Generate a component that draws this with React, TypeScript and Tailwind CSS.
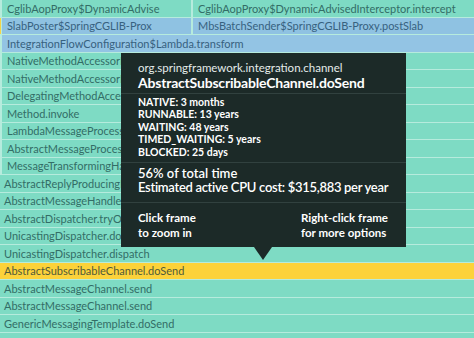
const teal = 'bg-[#7edbc4] text-[#336d66]';
const blue = 'bg-[#8fc2e2] text-[#37617f]';
const yellow = 'bg-[#fcd23a] text-[#4f5a3a]';

type Frame = { label: string; color: string; width?: string };
type Row = { indent: boolean; edge?: string; frames: Frame[] };

const rows: Row[] = [
  {
    indent: true,
    frames: [
      { label: 'CglibAopProxy$DynamicAdvise', color: teal, width: 'w-[189px]' },
      { label: 'CglibAopProxy$DynamicAdvisedInterceptor.intercept', color: teal },
    ],
  },
  {
    indent: true,
    edge: 'bg-[#f3d24a]',
    frames: [
      { label: 'SlabPoster$SpringCGLIB-Prox', color: blue, width: 'w-[189px]' },
      { label: 'MbsBatchSender$SpringCGLIB-Proxy.postSlab', color: blue },
    ],
  },
  { indent: true, frames: [{ label: 'IntegrationFlowConfiguration$Lambda.transform', color: 'bg-[#93c4e4] text-[#37617f]' }] },
  { indent: true, frames: [{ label: 'NativeMethodAccessorImpl.invoke0', color: teal }] },
  { indent: true, frames: [{ label: 'NativeMethodAccessorImpl.invoke', color: teal }] },
  { indent: true, frames: [{ label: 'DelegatingMethodAccessorImpl.invoke', color: teal }] },
  { indent: true, frames: [{ label: 'Method.invoke', color: teal }] },
  { indent: true, frames: [{ label: 'LambdaMessageProcessor.processMessage', color: teal }] },
  { indent: true, frames: [{ label: 'AbstractMessageProcessingTransformer.transform', color: teal }] },
  { indent: true, frames: [{ label: 'MessageTransformingHandler.handleRequestMessage', color: teal }] },
  { indent: false, frames: [{ label: 'AbstractReplyProducingMessageHandler.handleMessageInternal', color: teal }] },
  { indent: false, frames: [{ label: 'AbstractMessageHandler.handleMessage', color: teal }] },
  { indent: false, frames: [{ label: 'AbstractDispatcher.tryOptimizedDispatch', color: teal }] },
  { indent: false, frames: [{ label: 'UnicastingDispatcher.doDispatch', color: teal }] },
  { indent: false, frames: [{ label: 'UnicastingDispatcher.dispatch', color: teal }] },
  { indent: false, frames: [{ label: 'AbstractSubscribableChannel.doSend', color: yellow }] },
  { indent: false, frames: [{ label: 'AbstractMessageChannel.send', color: teal }] },
  { indent: false, frames: [{ label: 'AbstractMessageChannel.send', color: teal }] },
  { indent: false, frames: [{ label: 'GenericMessagingTemplate.doSend', color: teal }] },
  { indent: false, frames: [{ label: '', color: teal }] },
];

const states = ['NATIVE: 3 months', 'RUNNABLE: 13 years', 'WAITING: 48 years', 'TIMED_WAITING: 5 years', 'BLOCKED: 25 days'];

export default function App() {
  return (
    <div className="relative h-[338px] w-[474px] overflow-hidden bg-[#b6ebdd] font-['Lato',sans-serif]">
      <div className="flex flex-col gap-px">
        {rows.map((row, i) => (
          <div key={i} className={`flex h-[16.5px] ${row.indent ? 'pl-[2px]' : ''}`}>
            {row.edge && <div className={`-ml-[2px] mr-px w-px ${row.edge}`} />}
            {row.frames.map((f, j) => (
              <div
                key={j}
                className={`flex items-center overflow-hidden whitespace-nowrap text-[11px] leading-none ${f.color} ${
                  f.width ? `${f.width} shrink-0` : 'flex-1'
                } ${j > 0 ? 'ml-[2px]' : ''} ${row.indent ? 'pl-[5px]' : 'pl-[4px]'}`}
              >
                {f.label}
              </div>
            ))}
          </div>
        ))}
      </div>

      <div className="absolute left-[121px] top-[53px] h-[194px] w-[285px] bg-[#1c2a28] px-[17px] pt-[8px] text-white">
        <div className="text-[11.5px] leading-[14px] text-[#e4ecea]">org.springframework.integration.channel</div>
        <div className="text-[14px] font-bold leading-[16px] tracking-[-0.2px]">AbstractSubscribableChannel.doSend</div>
        <div className="-mx-[17px] mt-[2px] border-t border-[#31413f]" />
        <div className="pt-[2px] text-[10.5px] font-bold leading-[12.4px]">
          {states.map((s) => (
            <div key={s}>{s}</div>
          ))}
        </div>
        <div className="-mx-[17px] mt-[4px] border-t border-[#31413f]" />
        <div className="whitespace-nowrap pt-[3px] text-[13px] font-semibold leading-[14px]">
          <div>56% of total time</div>
          <div className="tracking-[-0.3px]">Estimated active CPU cost: $315,883 per year</div>
        </div>
        <div className="-mx-[17px] mt-[8px] border-t border-[#31413f]" />
        <div className="flex justify-between pt-[7px] pr-[1px] text-[11.5px] font-bold leading-[15px]">
          <div>
            <div>Click frame</div>
            <div>to zoom in</div>
          </div>
          <div>
            <div>Right-click frame</div>
            <div>for more options</div>
          </div>
        </div>
        <div className="absolute left-[133px] top-[194px] h-0 w-0 border-x-[9px] border-t-[13px] border-x-transparent border-t-[#1c2a28]" />
      </div>
    </div>
  );
}
